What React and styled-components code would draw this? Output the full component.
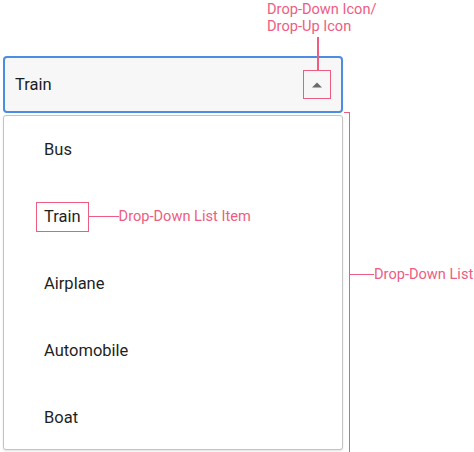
import React from "react";
import styled, { createGlobalStyle } from "styled-components";

const PINK = "#ee5c82";

const Global = createGlobalStyle`
  html, body { margin: 0; padding: 0; background: #ffffff; }
  body { font-family: Roboto, "Noto Sans", Arial, sans-serif; }
`;

const Canvas = styled.div`
  position: relative;
  width: 474px;
  height: 452px;
  overflow: hidden;
  background: #fff;
`;

const Column = styled.div`
  display: flex;
  flex-direction: column;
  gap: 2px;
  width: 340px;
  padding: 56px 0 0 3px;
`;

const Select = styled.div`
  box-sizing: border-box;
  height: 57px;
  display: flex;
  align-items: center;
  justify-content: space-between;
  padding: 0 10px 0 10px;
  border: 2px solid #4b8de3;
  border-radius: 4px;
  background: #f7f7f8;
  color: #1c1c1c;
  font-size: 16.5px;
`;

const IconBox = styled.div`
  box-sizing: border-box;
  width: 28px;
  height: 29px;
  display: flex;
  align-items: center;
  justify-content: center;
  border: 1.5px solid ${PINK};
`;

const List = styled.ul`
  box-sizing: border-box;
  list-style: none;
  margin: 0;
  padding: 0;
  height: 335px;
  border: 1px solid #c4c4c4;
  border-radius: 3px;
  box-shadow: 0 1px 2px rgba(0, 0, 0, 0.12);
  background: #fff;
`;

const Item = styled.li`
  height: 67px;
  display: flex;
  align-items: center;
  padding-left: ${(p) => (p.$marked ? "32px" : "40px")};
  color: #1f1f1f;
  font-size: 16.5px;
`;

const ItemBox = styled.span`
  box-sizing: border-box;
  display: inline-flex;
  align-items: center;
  height: 30px;
  padding: 0 7px;
  border: ${(p) => (p.$marked ? `1.5px solid ${PINK}` : "1.5px solid transparent")};
`;

const Connector = styled.span`
  display: inline-block;
  width: ${(p) => p.$w}px;
  height: 1.5px;
  background: ${PINK};
`;

const Note = styled.span`
  color: ${PINK};
  font-size: 14.6px;
  line-height: 17px;
  white-space: nowrap;
`;

const TopCallout = styled.div`
  position: absolute;
  left: 267px;
  top: 1px;
  display: flex;
  flex-direction: column;
`;

const VLine = styled.div`
  position: absolute;
  left: ${(p) => p.$x}px;
  top: ${(p) => p.$y}px;
  width: 1.5px;
  height: ${(p) => p.$h}px;
  background: ${PINK};
`;

const Bracket = styled.div`
  position: absolute;
  left: 344px;
  top: 112px;
  width: 5px;
  height: 345px;
  border-top: 1.5px solid ${PINK};
  border-right: 1.5px solid ${PINK};
`;

const SideCallout = styled.div`
  position: absolute;
  left: 350px;
  top: 266px;
  display: flex;
  align-items: center;
`;

const items = ["Bus", "Train", "Airplane", "Automobile", "Boat"];

export default function App() {
  return (
    <>
      <Global />
      <Canvas>
        <TopCallout>
          <Note>Drop-Down Icon/</Note>
          <Note>Drop-Up Icon</Note>
        </TopCallout>
        <VLine $x={317} $y={37} $h={34} />
        <Column>
          <Select>
            <span>Train</span>
            <IconBox>
              <svg width="10" height="6" viewBox="0 0 10 6">
                <path d="M0 5.5 L5 0.5 L10 5.5 Z" fill="#6a6a6a" />
              </svg>
            </IconBox>
          </Select>
          <List>
            {items.map((name) =>
              name === "Train" ? (
                <Item key={name} $marked>
                  <ItemBox $marked>{name}</ItemBox>
                  <Connector $w={30} />
                  <Note>Drop-Down List Item</Note>
                </Item>
              ) : (
                <Item key={name}>{name}</Item>
              )
            )}
          </List>
        </Column>
        <Bracket />
        <SideCallout>
          <Connector $w={24} />
          <Note>Drop-Down List</Note>
        </SideCallout>
      </Canvas>
    </>
  );
}
